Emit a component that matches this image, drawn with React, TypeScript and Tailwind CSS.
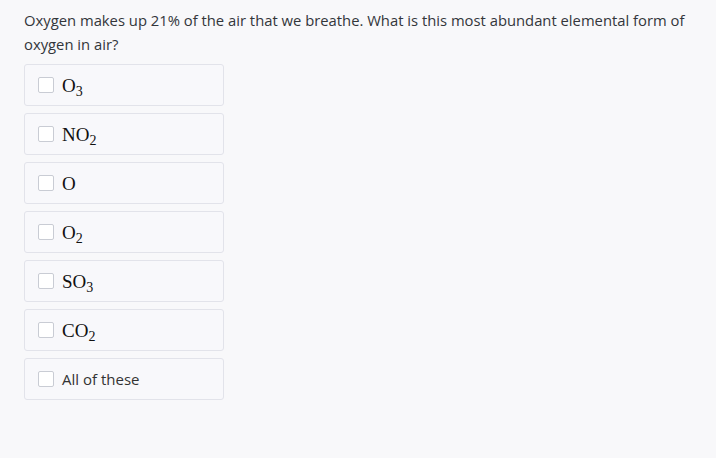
import React from "react";

function Opt({ children, math = true }: { children: React.ReactNode; math?: boolean }) {
  return (
    <div className="flex h-[42px] w-[200px] items-center rounded-[3px] border border-[#e2e3ea] bg-[#f8f8fb] pl-[13px]">
      <span className="h-[16px] w-[16px] shrink-0 rounded-[2px] border border-[#c9ccd4] bg-white" />
      {math ? (
        <span className="ml-[8px] text-[19px] leading-none text-[#111]" style={{ fontFamily: '"Liberation Serif", serif' }}>
          {children}
        </span>
      ) : (
        <span className="ml-[8px] text-[15px] text-[#333]" style={{ fontFamily: '"Open Sans", sans-serif' }}>
          {children}
        </span>
      )}
    </div>
  );
}

function Sub({ c }: { c: string }) {
  return <span className="relative top-[4px] text-[14px] leading-none">{c}</span>;
}

export default function App() {
  return (
    <div className="min-h-[458px] w-[716px] bg-[#f8f8fa] px-[24px] pt-[8px]" style={{ fontFamily: '"Open Sans", sans-serif' }}>
      <p className="text-[14.8px] leading-[24px] text-[#33363a]">
        Oxygen makes up 21% of the air that we breathe. What is this most abundant elemental form of oxygen in air?
      </p>
      <div className="mt-[8px] flex flex-col gap-[7px]">
        <Opt>O<Sub c="3" /></Opt>
        <Opt>NO<Sub c="2" /></Opt>
        <Opt>O</Opt>
        <Opt>O<Sub c="2" /></Opt>
        <Opt>SO<Sub c="3" /></Opt>
        <Opt>CO<Sub c="2" /></Opt>
        <Opt math={false}>All of these</Opt>
      </div>
    </div>
  );
}
